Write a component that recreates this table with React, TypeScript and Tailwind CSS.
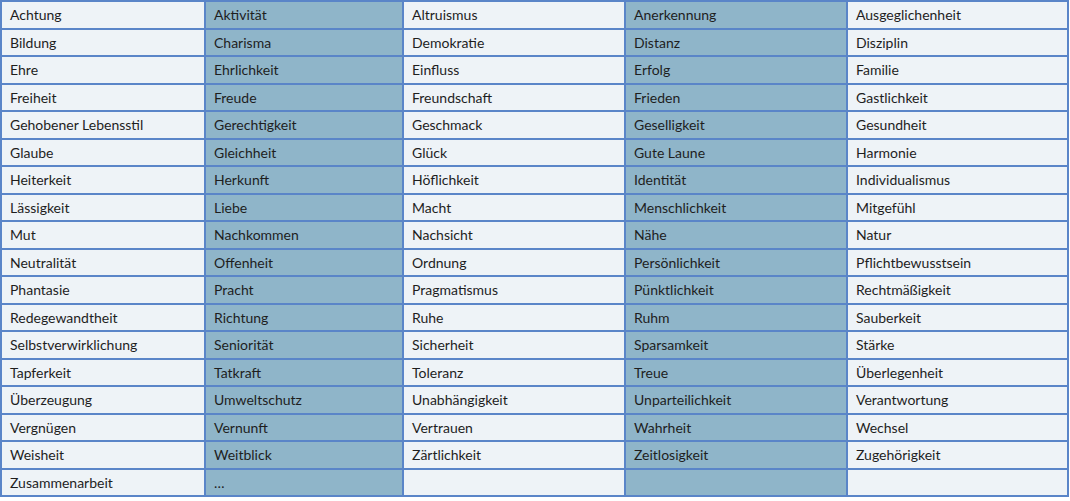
const rows: string[][] = [
    ['Achtung', 'Aktivität', 'Altruismus', 'Anerkennung', 'Ausgeglichenheit'],
    ['Bildung', 'Charisma', 'Demokratie', 'Distanz', 'Disziplin'],
    ['Ehre', 'Ehrlichkeit', 'Einfluss', 'Erfolg', 'Familie'],
    ['Freiheit', 'Freude', 'Freundschaft', 'Frieden', 'Gastlichkeit'],
    ['Gehobener Lebensstil', 'Gerechtigkeit', 'Geschmack', 'Geselligkeit', 'Gesundheit'],
    ['Glaube', 'Gleichheit', 'Glück', 'Gute Laune', 'Harmonie'],
    ['Heiterkeit', 'Herkunft', 'Höflichkeit', 'Identität', 'Individualismus'],
    ['Lässigkeit', 'Liebe', 'Macht', 'Menschlichkeit', 'Mitgefühl'],
    ['Mut', 'Nachkommen', 'Nachsicht', 'Nähe', 'Natur'],
    ['Neutralität', 'Offenheit', 'Ordnung', 'Persönlichkeit', 'Pflichtbewusstsein'],
    ['Phantasie', 'Pracht', 'Pragmatismus', 'Pünktlichkeit', 'Rechtmäßigkeit'],
    ['Redegewandtheit', 'Richtung', 'Ruhe', 'Ruhm', 'Sauberkeit'],
    ['Selbstverwirklichung', 'Seniorität', 'Sicherheit', 'Sparsamkeit', 'Stärke'],
    ['Tapferkeit', 'Tatkraft', 'Toleranz', 'Treue', 'Überlegenheit'],
    ['Überzeugung', 'Umweltschutz', 'Unabhängigkeit', 'Unparteilichkeit', 'Verantwortung'],
    ['Vergnügen', 'Vernunft', 'Vertrauen', 'Wahrheit', 'Wechsel'],
    ['Weisheit', 'Weitblick', 'Zärtlichkeit', 'Zeitlosigkeit', 'Zugehörigkeit'],
    ['Zusammenarbeit', '…', '', '', ''],
];

export default function App() {
    return (
        <div className="w-[1070px] h-[501px] bg-white">
            <div
                className="w-[1069px] h-[497px] bg-[#5a85c8] p-[2px] grid gap-[2px] grid-cols-[202px_196px_220px_220px_219px] grid-rows-[repeat(18,1fr)] text-[14px] text-[#1e1e1e]"
                style={{ fontFamily: 'Lato, "Liberation Sans", sans-serif' }}
            >
                {rows.flatMap((row, r) =>
                    row.map((cell, c) => (
                        <div
                            key={`${r}-${c}`}
                            className={`flex items-center pl-[8px] whitespace-nowrap ${c % 2 === 1 ? 'bg-[#8fb5c9]' : 'bg-[#eef3f7]'}`}
                        >
                            {cell}
                        </div>
                    ))
                )}
            </div>
        </div>
    );
}
